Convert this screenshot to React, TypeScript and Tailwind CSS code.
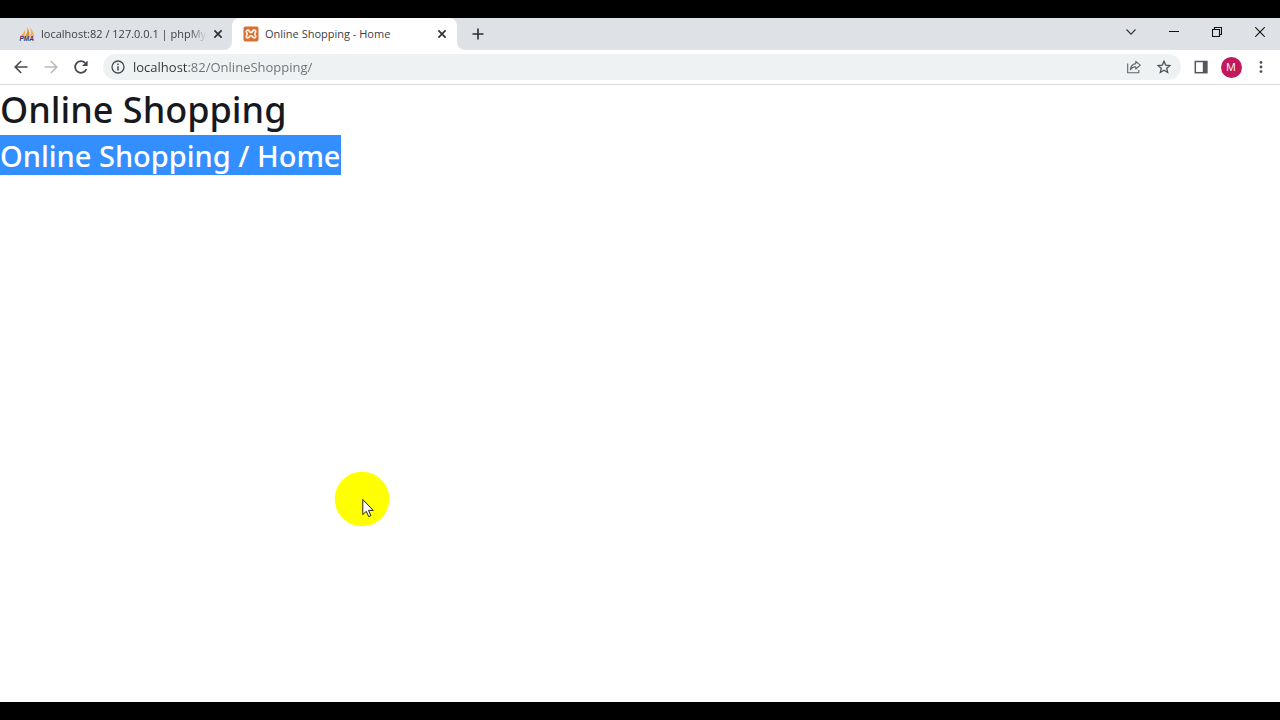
import type { ReactNode } from "react";

function IconButton({ label, className = "", children }: { label: string; className?: string; children: ReactNode }) {
  return (
    <button type="button" aria-label={label} className={`flex shrink-0 items-center justify-center ${className}`}>
      {children}
    </button>
  );
}

function CloseIcon() {
  return (
    <svg width="10" height="10" viewBox="0 0 10 10" stroke="#2b2e31" strokeWidth="1.6" fill="none">
      <path d="M1.4 1.4 8.6 8.6M8.6 1.4 1.4 8.6" />
    </svg>
  );
}

function PmaIcon() {
  return (
    <svg width="16" height="16" viewBox="0 0 16 16" className="shrink-0" aria-hidden="true">
      <path d="M5.6 3.6C5.4 6.6 3.6 9 0.8 10.4H5.2C6 8.2 6.2 5.8 5.6 3.6Z" fill="#f2a24a" />
      <path d="M8.2 1.2C8.8 4.8 8 8 5.8 10.4H10.2C10.6 6.8 9.8 3.6 8.2 1.2Z" fill="#f08c1e" />
      <path d="M11.2 2C12.2 5 12.2 8 10.8 10.4H15.2C15 7.2 13.6 4.4 11.2 2Z" fill="#f5ae5e" />
      <text x="0.4" y="15" fontSize="6.5" fontWeight="700" fontStyle="italic" fontFamily="Liberation Sans, sans-serif" fill="#35365f">
        PMA
      </text>
    </svg>
  );
}

function XamppIcon() {
  return (
    <svg width="16" height="16" viewBox="0 0 16 16" className="shrink-0" aria-hidden="true">
      <rect x="0.5" y="0.5" width="15" height="15" rx="2" fill="#d86f33" />
      <path
        d="M5 4.2C3.4 4.2 3 5.4 3.6 6.6L4.3 8 3.6 9.4C3 10.6 3.4 11.8 5 11.8 6.6 11.8 6.2 9.6 8 9.6 9.8 9.6 9.4 11.8 11 11.8 12.6 11.8 13 10.6 12.4 9.4L11.7 8 12.4 6.6C13 5.4 12.6 4.2 11 4.2 9.4 4.2 9.8 6.4 8 6.4 6.2 6.4 6.6 4.2 5 4.2Z"
        fill="none"
        stroke="#fff1e4"
        strokeWidth="1.7"
        strokeLinejoin="round"
      />
    </svg>
  );
}

function TabStrip() {
  return (
    <div className="flex h-8 bg-white text-[#3c4043]">
      <div className="flex w-[232px] items-center rounded-br-lg bg-[#dee1e6] pr-[6px] pl-[19px]">
        <PmaIcon />
        <a
          href="#phpmyadmin"
          className="ml-[6px] w-[166px] text-[11px] whitespace-nowrap [mask-image:linear-gradient(to_right,black_148px,transparent)]"
        >
          localhost:82 / 127.0.0.1 | phpMyA
        </a>
        <IconButton label="Close phpMyAdmin tab" className="ml-auto size-4">
          <CloseIcon />
        </IconButton>
      </div>
      <div className="flex bg-[#dee1e6]">
        <div className="flex w-[225px] items-center rounded-t-lg bg-white pr-[7px] pl-[11px]">
          <XamppIcon />
          <a href="#home" className="ml-[6px] flex-1 text-[11px] whitespace-nowrap">
            Online Shopping - Home
          </a>
          <IconButton label="Close Online Shopping tab" className="size-4">
            <CloseIcon />
          </IconButton>
        </div>
      </div>
      <div className="flex flex-1 justify-between rounded-bl-lg bg-[#dee1e6]">
        <IconButton label="New tab" className="w-[42px]">
          <svg width="12" height="12" viewBox="0 0 12 12" stroke="#2b2e31" strokeWidth="1.6">
            <path d="M6 0.5V11.5M0.5 6H11.5" />
          </svg>
        </IconButton>
        <div className="flex pb-[5px]">
          <IconButton label="Search tabs" className="w-[43px]">
            <svg width="12" height="8" viewBox="0 0 12 8" fill="none" stroke="#333" strokeWidth="1.1">
              <path d="M1.5 1.5 6 6.2 10.5 1.5" />
            </svg>
          </IconButton>
          <IconButton label="Minimize" className="w-[43px]">
            <svg width="10" height="10" viewBox="0 0 10 10" stroke="#111" strokeWidth="1">
              <path d="M0 4.5H10" />
            </svg>
          </IconButton>
          <IconButton label="Restore" className="w-[43px]">
            <svg width="10" height="10" viewBox="0 0 10 10" fill="none" stroke="#111" strokeWidth="1.1">
              <path d="M0.5 2.5H7.5V9.5H0.5ZM2.5 2.5V0.5H9.5V7.5H7.5" />
            </svg>
          </IconButton>
          <IconButton label="Close window" className="w-[42px] pl-[2px]">
            <svg width="10" height="10" viewBox="0 0 10 10" stroke="#111" strokeWidth="1.1">
              <path d="M0.3 0.3 9.7 9.7M9.7 0.3 0.3 9.7" />
            </svg>
          </IconButton>
        </div>
      </div>
    </div>
  );
}

function Toolbar() {
  return (
    <div className="flex h-[35px] items-center border-b border-[#dcdee0] bg-white pr-1 pl-[6px]">
      <IconButton label="Back" className="size-[30px]">
        <svg width="14" height="14" viewBox="0 0 14 14" fill="none" stroke="#45494d" strokeWidth="1.6">
          <path d="M13.5 7H1.5M7.2 1 1.2 7 7.2 13" />
        </svg>
      </IconButton>
      <IconButton label="Forward" className="size-[30px]">
        <svg width="14" height="14" viewBox="0 0 14 14" fill="none" stroke="#b8babd" strokeWidth="1.6">
          <path d="M0.5 7H12.5M6.8 1 12.8 7 6.8 13" />
        </svg>
      </IconButton>
      <IconButton label="Reload" className="size-[30px]">
        <svg width="14" height="14" viewBox="0 0 14 14">
          <path d="M12.4 9A5.8 5.8 0 1 1 11.2 3" fill="none" stroke="#45494d" strokeWidth="1.8" />
          <path d="M13.6 0.4V6H8Z" fill="#45494d" />
        </svg>
      </IconButton>
      <div className="ml-[7px] flex h-[26px] flex-1 items-center rounded-full bg-[#eff2f3] pr-[2px]">
        <IconButton label="Site information" className="w-[30px]">
          <svg width="14" height="14" viewBox="0 0 14 14">
            <circle cx="7" cy="7" r="6" fill="none" stroke="#45494d" strokeWidth="1.3" />
            <path d="M7 6.2V10.4M7 3.5V5" stroke="#45494d" strokeWidth="1.5" />
          </svg>
        </IconButton>
        <input
          type="text"
          aria-label="Address"
          defaultValue="localhost:82/OnlineShopping/"
          className="min-w-0 flex-1 bg-[linear-gradient(to_right,#2f3336_54px,#6b7075_54px)] bg-clip-text pt-[2px] text-[13px] text-transparent outline-none"
        />
        <IconButton label="Share" className="size-[30px]">
          <svg width="14" height="14" viewBox="0 0 14 14" fill="none" stroke="#5f6368" strokeWidth="1.1">
            <path d="M0.7 3.5V12.8H11.8V10" />
            <path d="M8.8 1.4 13.3 5.2 8.8 9V6.8C6.4 6.7 4.6 7.8 3.4 9.8 3.7 6.6 5.4 4 8.8 3.6Z" strokeLinejoin="round" />
          </svg>
        </IconButton>
        <IconButton label="Bookmark this tab" className="size-[30px]">
          <svg width="14" height="14" viewBox="0 0 14 14" fill="none" stroke="#4d5156" strokeWidth="1.3">
            <path d="M7 1.2 8.7 5.1 13 5.5 9.7 8.3 10.7 12.5 7 10.3 3.3 12.5 4.3 8.3 1 5.5 5.3 5.1Z" />
          </svg>
        </IconButton>
      </div>
      <IconButton label="Side panel" className="ml-[5px] size-[30px]">
        <svg width="14" height="14" viewBox="0 0 14 14">
          <rect x="1.3" y="1.5" width="11.6" height="11.2" fill="none" stroke="#54585c" strokeWidth="1.5" />
          <rect x="8.8" y="1.5" width="4.2" height="11.2" fill="#54585c" />
        </svg>
      </IconButton>
      <IconButton label="Profile M" className="size-[30px]">
        <span className="flex size-[21px] items-center justify-center rounded-full bg-[#c2185b] text-[11px] text-white">M</span>
      </IconButton>
      <IconButton label="Menu" className="size-[30px]">
        <svg width="4" height="14" viewBox="0 0 4 14" fill="#4d5156">
          <circle cx="2" cy="2.4" r="1.4" />
          <circle cx="2" cy="7" r="1.4" />
          <circle cx="2" cy="11.6" r="1.4" />
        </svg>
      </IconButton>
    </div>
  );
}

export default function App() {
  return (
    <div className="relative flex min-h-screen flex-col border-y-[18px] border-black bg-white font-['Open_Sans',sans-serif]">
      <TabStrip />
      <Toolbar />
      <main className="flex-1 font-['Noto_Sans',sans-serif] font-medium text-[#16191d]">
        <h1 className="text-[36px] leading-[50px]">Online Shopping</h1>
        <h2 className="flex text-[29px] leading-[38px] text-white">
          <span className="bg-[#338fff] pt-[2px]">Online Shopping / Home</span>
        </h2>
      </main>
      <svg className="pointer-events-none absolute top-[453px] left-[334px]" width="56" height="56" viewBox="0 0 56 56" aria-hidden="true">
        <circle cx="28" cy="28" r="27.3" fill="#ffff00" />
        <path d="M28.8 28.5V43.6L32.3 40.3 34.7 45.6 36.9 44.6 34.5 39.4H39.2Z" fill="#fff" stroke="#222" strokeWidth="1" />
      </svg>
    </div>
  );
}
